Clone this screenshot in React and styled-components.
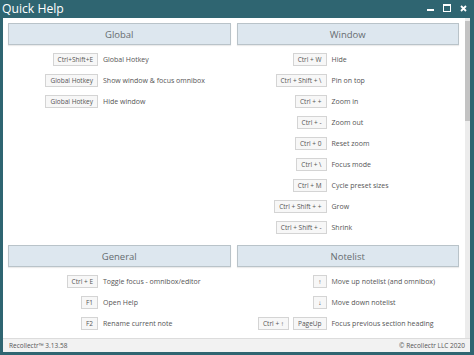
import React from "react";
import styled, { createGlobalStyle } from "styled-components";

const GlobalStyle = createGlobalStyle`
  html, body {
    margin: 0;
    padding: 0;
    overflow: hidden;
  }
  body {
    font-family: "Open Sans", "Noto Sans", sans-serif;
  }
`;

const Frame = styled.div`
  width: 474px;
  height: 355px;
  box-sizing: border-box;
  background: #2f6571;
  padding: 0 4px 3px 3px;
  display: flex;
  flex-direction: column;
`;

const TitleBar = styled.div`
  height: 18px;
  display: flex;
  align-items: center;
  justify-content: space-between;
  color: #ffffff;
`;

const Title = styled.div`
  font-size: 12.2px;
  line-height: 18px;
  margin-left: -1px;
`;

const Controls = styled.div`
  display: flex;
  align-items: center;
  gap: 9px;
  margin-right: 3px;
  margin-top: -2px;
`;

const Body = styled.div`
  flex: 1;
  display: flex;
  flex-direction: column;
  background: #ffffff;
  min-height: 0;
`;

const ScrollArea = styled.div`
  flex: 1;
  display: flex;
  min-height: 0;
  overflow: hidden;
`;

const Content = styled.div`
  flex: 1;
  padding: 5px 6px 0 5px;
  display: grid;
  grid-template-columns: 1fr 1fr;
  column-gap: 6px;
  row-gap: 7px;
  align-content: start;
`;

const Scrollbar = styled.div`
  width: 5px;
  background: #ececec;
  display: flex;
  flex-direction: column;
`;

const Thumb = styled.div`
  height: 100px;
  margin-top: 3px;
  background: #c3c3c3;
`;

const Section = styled.div`
  display: flex;
  flex-direction: column;
`;

const SectionHeader = styled.div`
  height: 22px;
  box-sizing: border-box;
  border: 1px solid #b9c3c9;
  background: #dde7ef;
  box-shadow: 0 1px 1px rgba(0, 0, 0, 0.08);
  display: flex;
  align-items: center;
  justify-content: center;
  font-size: 9.5px;
  color: #666c70;
  margin-bottom: 4px;
`;

const Row = styled.div`
  height: 21px;
  display: grid;
  grid-template-columns: 90px 1fr;
  column-gap: 5px;
  align-items: center;
`;

const Keys = styled.div`
  display: flex;
  justify-content: flex-end;
  gap: 4px;
`;

const Key = styled.span`
  height: 13px;
  box-sizing: border-box;
  padding: 0 4px;
  border: 1px solid #d4d4d4;
  background: #f7f7f7;
  font-size: 6.5px;
  line-height: 11px;
  color: #555;
  white-space: nowrap;
`;

const Desc = styled.span`
  font-size: 7px;
  color: #555;
  white-space: nowrap;
`;

const Footer = styled.div`
  height: 14px;
  box-sizing: border-box;
  border-top: 1px solid #dcdcdc;
  background: #f2f2f2;
  display: flex;
  align-items: center;
  justify-content: space-between;
  padding: 0 5px 0 6px;
  font-size: 6.5px;
  color: #555;
`;

const sections = [
  {
    title: "Global",
    rows: [
      [["Ctrl+Shift+E"], "Global Hotkey"],
      [["Global Hotkey"], "Show window & focus omnibox"],
      [["Global Hotkey"], "Hide window"],
    ],
  },
  {
    title: "Window",
    rows: [
      [["Ctrl + W"], "Hide"],
      [["Ctrl + Shift + \\"], "Pin on top"],
      [["Ctrl + +"], "Zoom in"],
      [["Ctrl + -"], "Zoom out"],
      [["Ctrl + 0"], "Reset zoom"],
      [["Ctrl + \\"], "Focus mode"],
      [["Ctrl + M"], "Cycle preset sizes"],
      [["Ctrl + Shift + +"], "Grow"],
      [["Ctrl + Shift + -"], "Shrink"],
    ],
  },
  {
    title: "General",
    rows: [
      [["Ctrl + E"], "Toggle focus - omnibox/editor"],
      [["F1"], "Open Help"],
      [["F2"], "Rename current note"],
    ],
  },
  {
    title: "Notelist",
    rows: [
      [["↑"], "Move up notelist (and omnibox)"],
      [["↓"], "Move down notelist"],
      [["Ctrl + ↑", "PageUp"], "Focus previous section heading"],
    ],
  },
];

function WindowControls() {
  return (
    <Controls>
      <svg width="7" height="8" viewBox="0 0 7 8">
        <rect x="0" y="5" width="7" height="2" fill="#fff" />
      </svg>
      <svg width="8" height="8" viewBox="0 0 8 8">
        <rect x="0.5" y="0.5" width="7" height="7" fill="none" stroke="#fff" strokeWidth="1" />
        <rect x="0" y="0" width="8" height="2" fill="#fff" />
      </svg>
      <svg width="7" height="7" viewBox="0 0 7 7">
        <path d="M1 1 L6 6 M6 1 L1 6" stroke="#fff" strokeWidth="1.8" />
      </svg>
    </Controls>
  );
}

export default function App() {
  return (
    <>
      <GlobalStyle />
      <Frame>
        <TitleBar>
          <Title>Quick Help</Title>
          <WindowControls />
        </TitleBar>
        <Body>
          <ScrollArea>
            <Content>
              {sections.map((s) => (
                <Section key={s.title}>
                  <SectionHeader>{s.title}</SectionHeader>
                  {s.rows.map(([keys, desc]) => (
                    <Row key={desc}>
                      <Keys>
                        {keys.map((k) => (
                          <Key key={k}>{k}</Key>
                        ))}
                      </Keys>
                      <Desc>{desc}</Desc>
                    </Row>
                  ))}
                </Section>
              ))}
            </Content>
            <Scrollbar>
              <Thumb />
            </Scrollbar>
          </ScrollArea>
          <Footer>
            <span>Recollectr™ 3.13.58</span>
            <span>© Recollectr LLC 2020</span>
          </Footer>
        </Body>
      </Frame>
    </>
  );
}
